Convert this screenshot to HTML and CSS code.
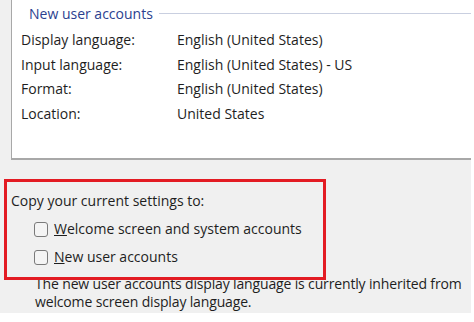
FILE: index.html
```html
<!DOCTYPE html>
<html lang="en">
<head>
  <meta charset="UTF-8" />
  <title>Region settings</title>
  <link rel="stylesheet" href="styles.css">
</head>
<body>
  <div class="frame">
    <div class="panel">
      <div class="group-title">
        <span class="legend">New user accounts</span>
        <span class="rule"></span>
      </div>
      <div class="rows">
        <span>Display language:</span><span>English (United States)</span>
        <span>Input language:</span><span>English (United States) - US</span>
        <span>Format:</span><span>English (United States)</span>
        <span>Location:</span><span>United States</span>
      </div>
    </div>

    <div class="copy-box">
      <p class="copy-title">Copy your current settings to:</p>
      <label class="check"><span class="box"></span><span><u>W</u>elcome screen and system accounts</span></label>
      <label class="check"><span class="box"></span><span><u>N</u>ew user accounts</span></label>
    </div>

    <p class="note">The new user accounts display language is currently inherited from<br>welcome screen display language.</p>
  </div>
</body>
</html>
```

FILE: styles.css
```css
/* Reset */
* { margin: 0; padding: 0; box-sizing: border-box; }

html, body {
  height: 100%;
  background: #ffffff;
  font-family: 'Open Sans', 'Noto Sans', sans-serif;
  font-size: 14px;
  color: #1e1e1e;
  overflow: hidden;
}

.frame {
  width: 471px;
  height: 313px;
  background: #f0f0f0;
}

/* white settings panel */
.panel {
  margin-left: 11px;
  height: 160px;
  background: #fff;
  border-left: 1px solid #a8a8a8;
  border-bottom: 2px solid #a8a8a8;
  padding-top: 3px;
}

.group-title {
  display: flex;
  align-items: center;
  gap: 6px;
  padding-left: 17px;
  height: 20px;
}
.legend {
  color: #2b3f8f;
  white-space: nowrap;
}
.rule {
  flex: 1;
  height: 1px;
  background: #c9cfe0;
}

.rows {
  display: grid;
  grid-template-columns: 156px 1fr;
  padding: 5px 0 0 9px;
  line-height: 24.5px;
}

/* highlighted copy section */
.copy-box {
  position: relative;
  z-index: 1;
  margin: 19px 0 0 4px;
  width: 322px;
  height: 101px;
  border: 3px solid #e31b23;
}
.copy-title {
  padding: 9px 0 0 4px;
  line-height: 20px;
}
.check {
  display: flex;
  align-items: center;
  gap: 6px;
  margin: 8px 0 0 27px;
  line-height: 20px;
}
.check + .check { margin-top: 8px; }
.check u { text-decoration-thickness: 1px; }
.box {
  width: 14px;
  height: 15px;
  border: 1px solid #7a7a7a;
  border-radius: 3px;
  background: #f4f4f4;
}

.note {
  margin: -5px 0 0 35px;
  line-height: 18px;
  white-space: nowrap;
  letter-spacing: -0.15px;
}
```
